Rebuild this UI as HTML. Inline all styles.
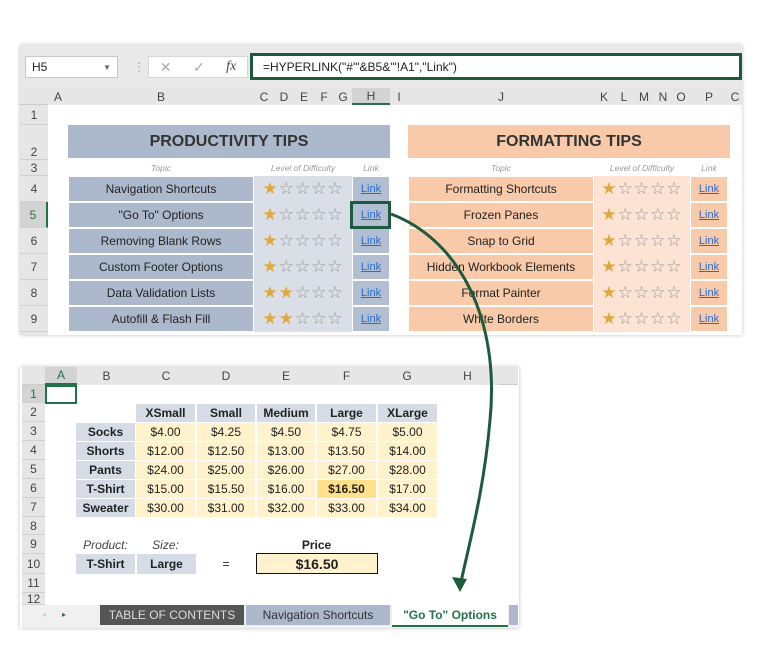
<!DOCTYPE html>
<html><head><meta charset="utf-8"><style>
*{margin:0;padding:0;box-sizing:border-box}
body{width:768px;height:671px;background:#fff;position:relative;overflow:hidden;font-family:"Liberation Sans",Calibri,sans-serif;color:#222}
.a{position:absolute}
.c{position:absolute;display:flex;align-items:center;justify-content:center;white-space:nowrap}
.hd{background:#e6e6e6;color:#444;font-size:12px}
.rn{background:#e6e6e6;color:#444;font-size:12px;border-bottom:1px solid #d0d0d0}
.lk{color:#2a6bd0;text-decoration:underline;font-size:11px}
.st{font-size:17px;letter-spacing:1px;color:#999}
.st b{color:#e0a93e;font-weight:normal}
.it{font-style:italic;color:#999;font-size:8.5px}
</style></head><body>
<div class="a" style="left:20px;top:45px;width:722px;height:290px;background:#fff;box-shadow:0 0 4px rgba(0,0,0,.25)"></div>
<div class="a" style="left:20px;top:45px;width:722px;height:43px;background:#e9e9e9"></div>
<div class="c" style="left:25px;top:56px;width:93px;height:22px;background:#fff;border:1px solid #c6c6c6;justify-content:flex-start;padding-left:6px;font-size:12px">H5<span style="position:absolute;right:6px;font-size:8px;color:#666">▼</span></div>
<div class="a" style="left:133px;top:60px;color:#aaa;font-size:12px">⋮</div>
<div class="c" style="left:148px;top:56px;width:100px;height:22px;background:#fff;border:1px solid #d6d6d6;font-size:14px;color:#aaa;justify-content:space-around">✕<span>✓</span><i style="color:#444;font-family:'Liberation Serif',serif">fx</i></div>
<div class="c" style="left:250px;top:53px;width:492px;height:27px;background:#fff;border:3px solid #1e5a3c;justify-content:flex-start;padding-left:10px;font-size:12px">=HYPERLINK("#'"&amp;B5&amp;"'!A1","Link")</div>
<div class="a hd" style="left:20px;top:88px;width:722px;height:17px;border-bottom:1px solid #ccc"></div>
<div class="c hd" style="left:48px;top:88px;width:20px;height:17px">A</div>
<div class="c hd" style="left:68px;top:88px;width:186px;height:17px">B</div>
<div class="c hd" style="left:254px;top:88px;width:20px;height:17px">C</div>
<div class="c hd" style="left:274px;top:88px;width:20px;height:17px">D</div>
<div class="c hd" style="left:294px;top:88px;width:20px;height:17px">E</div>
<div class="c hd" style="left:314px;top:88px;width:20px;height:17px">F</div>
<div class="c hd" style="left:334px;top:88px;width:18px;height:17px">G</div>
<div class="c hd" style="left:352px;top:88px;width:38px;height:17px;background:#d3d3d3;border-bottom:2px solid #217346">H</div>
<div class="c hd" style="left:390px;top:88px;width:18px;height:17px">I</div>
<div class="c hd" style="left:408px;top:88px;width:186px;height:17px">J</div>
<div class="c hd" style="left:594px;top:88px;width:20px;height:17px">K</div>
<div class="c hd" style="left:614px;top:88px;width:20px;height:17px">L</div>
<div class="c hd" style="left:634px;top:88px;width:20px;height:17px">M</div>
<div class="c hd" style="left:654px;top:88px;width:18px;height:17px">N</div>
<div class="c hd" style="left:672px;top:88px;width:18px;height:17px">O</div>
<div class="c hd" style="left:690px;top:88px;width:38px;height:17px">P</div>
<div class="c hd" style="left:728px;top:88px;width:14px;height:17px">C</div>
<div class="a rn" style="left:20px;top:105px;width:28px;height:230px;border:none"></div>
<div class="c rn" style="left:20px;top:105px;width:28px;height:20px">1</div>
<div class="c rn" style="left:20px;top:125px;width:28px;height:35px;align-items:flex-end">2</div>
<div class="c rn" style="left:20px;top:160px;width:28px;height:16px">3</div>
<div class="c rn" style="left:20px;top:176px;width:28px;height:26px">4</div>
<div class="c rn" style="left:20px;top:202px;width:28px;height:26px;background:#d3d3d3;color:#217346;border-right:2px solid #217346">5</div>
<div class="c rn" style="left:20px;top:228px;width:28px;height:26px">6</div>
<div class="c rn" style="left:20px;top:254px;width:28px;height:26px">7</div>
<div class="c rn" style="left:20px;top:280px;width:28px;height:26px">8</div>
<div class="c rn" style="left:20px;top:306px;width:28px;height:26px">9</div>

<div class="c" style="left:68px;top:125px;width:322px;height:33px;background:#acb9cc;font-weight:bold;font-size:16px;color:#333">PRODUCTIVITY TIPS</div>
<div class="c" style="left:408px;top:125px;width:322px;height:33px;background:#f8caa9;font-weight:bold;font-size:16px;color:#333">FORMATTING TIPS</div>
<div class="c it" style="left:68px;top:161px;width:186px;height:14px">Topic</div>
<div class="c it" style="left:254px;top:161px;width:98px;height:14px">Level of Difficulty</div>
<div class="c it" style="left:352px;top:161px;width:38px;height:14px">Link</div>
<div class="c it" style="left:408px;top:161px;width:186px;height:14px">Topic</div>
<div class="c it" style="left:594px;top:161px;width:96px;height:14px">Level of Difficulty</div>
<div class="c it" style="left:690px;top:161px;width:38px;height:14px">Link</div>
<div class="a" style="left:254px;top:176px;width:98px;height:156px;background:#d9dee7"></div>
<div class="a" style="left:594px;top:176px;width:96px;height:156px;background:#fce3d4"></div>

<div class="c" style="left:69px;top:177px;width:184px;height:24px;background:#acb9cc;font-size:12px">Navigation Shortcuts</div>
<div class="c" style="left:69px;top:203px;width:184px;height:24px;background:#acb9cc;font-size:12px">"Go To" Options</div>
<div class="c" style="left:69px;top:229px;width:184px;height:24px;background:#acb9cc;font-size:12px">Removing Blank Rows</div>
<div class="c" style="left:69px;top:255px;width:184px;height:24px;background:#acb9cc;font-size:12px">Custom Footer Options</div>
<div class="c" style="left:69px;top:281px;width:184px;height:24px;background:#acb9cc;font-size:12px">Data Validation Lists</div>
<div class="c" style="left:69px;top:307px;width:184px;height:24px;background:#acb9cc;font-size:12px">Autofill &amp; Flash Fill</div>
<div class="c st" style="left:254px;top:177px;width:98px;height:24px"><b>★</b>☆☆☆☆</div>
<div class="c st" style="left:254px;top:203px;width:98px;height:24px"><b>★</b>☆☆☆☆</div>
<div class="c st" style="left:254px;top:229px;width:98px;height:24px"><b>★</b>☆☆☆☆</div>
<div class="c st" style="left:254px;top:255px;width:98px;height:24px"><b>★</b>☆☆☆☆</div>
<div class="c st" style="left:254px;top:281px;width:98px;height:24px"><b>★★</b>☆☆☆</div>
<div class="c st" style="left:254px;top:307px;width:98px;height:24px"><b>★★</b>☆☆☆</div>
<div class="c lk" style="left:353px;top:177px;width:36px;height:24px;background:#b2bed1">Link</div>
<div class="c lk" style="left:353px;top:203px;width:36px;height:24px;background:#b2bed1">Link</div>
<div class="c lk" style="left:353px;top:229px;width:36px;height:24px;background:#b2bed1">Link</div>
<div class="c lk" style="left:353px;top:255px;width:36px;height:24px;background:#b2bed1">Link</div>
<div class="c lk" style="left:353px;top:281px;width:36px;height:24px;background:#b2bed1">Link</div>
<div class="c lk" style="left:353px;top:307px;width:36px;height:24px;background:#b2bed1">Link</div>
<div class="a" style="left:350px;top:201px;width:41px;height:28px;border:3px solid #1e5a3c"></div>

<div class="c" style="left:409px;top:177px;width:184px;height:24px;background:#f8caa9;font-size:12px">Formatting Shortcuts</div>
<div class="c" style="left:409px;top:203px;width:184px;height:24px;background:#f8caa9;font-size:12px">Frozen Panes</div>
<div class="c" style="left:409px;top:229px;width:184px;height:24px;background:#f8caa9;font-size:12px">Snap to Grid</div>
<div class="c" style="left:409px;top:255px;width:184px;height:24px;background:#f8caa9;font-size:12px">Hidden Workbook Elements</div>
<div class="c" style="left:409px;top:281px;width:184px;height:24px;background:#f8caa9;font-size:12px">Format Painter</div>
<div class="c" style="left:409px;top:307px;width:184px;height:24px;background:#f8caa9;font-size:12px">White Borders</div>
<div class="c st" style="left:594px;top:177px;width:96px;height:24px"><b>★</b>☆☆☆☆</div>
<div class="c st" style="left:594px;top:203px;width:96px;height:24px"><b>★</b>☆☆☆☆</div>
<div class="c st" style="left:594px;top:229px;width:96px;height:24px"><b>★</b>☆☆☆☆</div>
<div class="c st" style="left:594px;top:255px;width:96px;height:24px"><b>★</b>☆☆☆☆</div>
<div class="c st" style="left:594px;top:281px;width:96px;height:24px"><b>★</b>☆☆☆☆</div>
<div class="c st" style="left:594px;top:307px;width:96px;height:24px"><b>★</b>☆☆☆☆</div>
<div class="c lk" style="left:691px;top:177px;width:36px;height:24px;background:#f8caa9">Link</div>
<div class="c lk" style="left:691px;top:203px;width:36px;height:24px;background:#f8caa9">Link</div>
<div class="c lk" style="left:691px;top:229px;width:36px;height:24px;background:#f8caa9">Link</div>
<div class="c lk" style="left:691px;top:255px;width:36px;height:24px;background:#f8caa9">Link</div>
<div class="c lk" style="left:691px;top:281px;width:36px;height:24px;background:#f8caa9">Link</div>
<div class="c lk" style="left:691px;top:307px;width:36px;height:24px;background:#f8caa9">Link</div>

<div class="a" style="left:20px;top:367px;width:499px;height:261px;background:#fff;box-shadow:0 0 4px rgba(0,0,0,.25)"></div>
<div class="a hd" style="left:22px;top:367px;width:496px;height:18px;border-bottom:1px solid #ccc"></div>
<div class="c hd" style="left:45px;top:367px;width:32px;height:18px;background:#d3d3d3;color:#217346;border-bottom:2px solid #217346">A</div>
<div class="c hd" style="left:77px;top:367px;width:59px;height:18px">B</div>
<div class="c hd" style="left:136px;top:367px;width:60px;height:18px">C</div>
<div class="c hd" style="left:196px;top:367px;width:60px;height:18px">D</div>
<div class="c hd" style="left:256px;top:367px;width:60px;height:18px">E</div>
<div class="c hd" style="left:316px;top:367px;width:61px;height:18px">F</div>
<div class="c hd" style="left:377px;top:367px;width:60px;height:18px">G</div>
<div class="c hd" style="left:437px;top:367px;width:61px;height:18px">H</div>
<div class="a rn" style="left:22px;top:385px;width:23px;height:220px;border:none"></div>
<div class="c rn" style="left:22px;top:385px;width:23px;height:18px;background:#d3d3d3;color:#217346">1</div>
<div class="c rn" style="left:22px;top:403px;width:23px;height:19px">2</div>
<div class="c rn" style="left:22px;top:422px;width:23px;height:19px">3</div>
<div class="c rn" style="left:22px;top:441px;width:23px;height:19px">4</div>
<div class="c rn" style="left:22px;top:460px;width:23px;height:19px">5</div>
<div class="c rn" style="left:22px;top:479px;width:23px;height:19px">6</div>
<div class="c rn" style="left:22px;top:498px;width:23px;height:19px">7</div>
<div class="c rn" style="left:22px;top:517px;width:23px;height:18px">8</div>
<div class="c rn" style="left:22px;top:535px;width:23px;height:19px">9</div>
<div class="c rn" style="left:22px;top:554px;width:23px;height:20px">10</div>
<div class="c rn" style="left:22px;top:574px;width:23px;height:19px">11</div>
<div class="c rn" style="left:22px;top:593px;width:23px;height:12px;overflow:hidden">12</div>
<div class="a" style="left:45px;top:385px;width:32px;height:19px;border:2px solid #217346"></div>

<div style="font-size:12px;font-weight:bold">
<div class="c" style="left:136px;top:404px;width:59px;height:18px;background:#d6dce5">XSmall</div>
<div class="c" style="left:197px;top:404px;width:58px;height:18px;background:#d6dce5">Small</div>
<div class="c" style="left:257px;top:404px;width:58px;height:18px;background:#d6dce5">Medium</div>
<div class="c" style="left:317px;top:404px;width:59px;height:18px;background:#d6dce5">Large</div>
<div class="c" style="left:378px;top:404px;width:59px;height:18px;background:#d6dce5">XLarge</div>
<div class="c" style="left:76px;top:423px;width:59px;height:18px;background:#d6dce5">Socks</div>
<div class="c" style="left:76px;top:442px;width:59px;height:18px;background:#d6dce5">Shorts</div>
<div class="c" style="left:76px;top:461px;width:59px;height:18px;background:#d6dce5">Pants</div>
<div class="c" style="left:76px;top:480px;width:59px;height:18px;background:#d6dce5">T-Shirt</div>
<div class="c" style="left:76px;top:499px;width:59px;height:18px;background:#d6dce5">Sweater</div>
</div>
<div style="font-size:12px">
<div class="c" style="left:136px;top:423px;width:59px;height:18px;background:#fff2cc">$4.00</div><div class="c" style="left:197px;top:423px;width:58px;height:18px;background:#fff2cc">$4.25</div><div class="c" style="left:257px;top:423px;width:58px;height:18px;background:#fff2cc">$4.50</div><div class="c" style="left:317px;top:423px;width:59px;height:18px;background:#fff2cc">$4.75</div><div class="c" style="left:378px;top:423px;width:59px;height:18px;background:#fff2cc">$5.00</div>
<div class="c" style="left:136px;top:442px;width:59px;height:18px;background:#fff2cc">$12.00</div><div class="c" style="left:197px;top:442px;width:58px;height:18px;background:#fff2cc">$12.50</div><div class="c" style="left:257px;top:442px;width:58px;height:18px;background:#fff2cc">$13.00</div><div class="c" style="left:317px;top:442px;width:59px;height:18px;background:#fff2cc">$13.50</div><div class="c" style="left:378px;top:442px;width:59px;height:18px;background:#fff2cc">$14.00</div>
<div class="c" style="left:136px;top:461px;width:59px;height:18px;background:#fff2cc">$24.00</div><div class="c" style="left:197px;top:461px;width:58px;height:18px;background:#fff2cc">$25.00</div><div class="c" style="left:257px;top:461px;width:58px;height:18px;background:#fff2cc">$26.00</div><div class="c" style="left:317px;top:461px;width:59px;height:18px;background:#fff2cc">$27.00</div><div class="c" style="left:378px;top:461px;width:59px;height:18px;background:#fff2cc">$28.00</div>
<div class="c" style="left:136px;top:480px;width:59px;height:18px;background:#fff2cc">$15.00</div><div class="c" style="left:197px;top:480px;width:58px;height:18px;background:#fff2cc">$15.50</div><div class="c" style="left:257px;top:480px;width:58px;height:18px;background:#fff2cc">$16.00</div><div class="c" style="left:317px;top:480px;width:59px;height:18px;background:#ffe18a;font-weight:bold">$16.50</div><div class="c" style="left:378px;top:480px;width:59px;height:18px;background:#fff2cc">$17.00</div>
<div class="c" style="left:136px;top:499px;width:59px;height:18px;background:#fff2cc">$30.00</div><div class="c" style="left:197px;top:499px;width:58px;height:18px;background:#fff2cc">$31.00</div><div class="c" style="left:257px;top:499px;width:58px;height:18px;background:#fff2cc">$32.00</div><div class="c" style="left:317px;top:499px;width:59px;height:18px;background:#fff2cc">$33.00</div><div class="c" style="left:378px;top:499px;width:59px;height:18px;background:#fff2cc">$34.00</div>
<div class="c" style="left:76px;top:536px;width:59px;height:18px;font-style:italic;color:#444">Product:</div>
<div class="c" style="left:136px;top:536px;width:59px;height:18px;font-style:italic;color:#444">Size:</div>
<div class="c" style="left:256px;top:536px;width:121px;height:18px;font-weight:bold">Price</div>
<div class="c" style="left:76px;top:554px;width:59px;height:20px;background:#d6dce5;font-weight:bold">T-Shirt</div>
<div class="c" style="left:137px;top:554px;width:59px;height:20px;background:#d6dce5;font-weight:bold">Large</div>
<div class="c" style="left:196px;top:554px;width:60px;height:20px">=</div>
<div class="c" style="left:256px;top:553px;width:122px;height:21px;background:#fff2cc;border:1.5px solid #111;font-weight:bold;font-size:14px">$16.50</div>
</div>
<div class="a" style="left:22px;top:605px;width:496px;height:23px;background:#f0f0f0"></div>
<div class="a" style="left:42px;top:610px;font-size:8px;color:#ccc">◂</div>
<div class="a" style="left:62px;top:610px;font-size:8px;color:#217346">▸</div>
<div class="c" style="left:100px;top:605px;width:144px;height:20px;background:#555;color:#ddd;font-size:12px">TABLE OF CONTENTS</div>
<div class="c" style="left:246px;top:605px;width:144px;height:20px;background:#acb9cc;color:#333;font-size:12px">Navigation Shortcuts</div>
<div class="c" style="left:392px;top:605px;width:116px;height:22px;background:#fff;color:#217346;font-weight:bold;font-size:12px;border-bottom:2px solid #217346">"Go To" Options</div>
<div class="a" style="left:509px;top:605px;width:9px;height:20px;background:#acb9cc"></div>
<svg class="a" style="left:0;top:0" width="768" height="671"><path d="M391 214 C 460 240 500 320 490 420 C 484 490 470 540 461 582" fill="none" stroke="#1e5a3c" stroke-width="3"/><path d="M452 577 L460 592 L467 579 Z" fill="#1e5a3c"/></svg>
</body></html>
